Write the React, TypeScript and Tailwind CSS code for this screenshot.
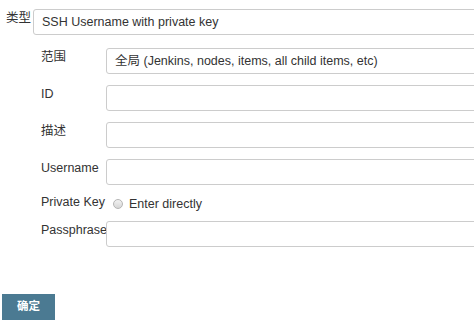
export default function App() {
  const fieldCls =
    'h-[26px] w-[420px] shrink-0 rounded-[3px] border border-[#cccccc] bg-white px-2 text-[12.5px] text-[#333] flex items-center';

  const rows: { label: string; value?: string }[] = [
    { label: 'ID' },
    { label: '描述' },
    { label: 'Username' },
  ];

  return (
    <div
      className="h-[333px] w-full overflow-hidden bg-white text-[12.5px] text-[#333]"
      style={{ fontFamily: '"Liberation Sans", Arial, "Noto Sans CJK SC", sans-serif' }}
    >
      <div className="flex pt-[9px]">
        <div className="w-[33px] shrink-0 pl-[6px] pt-[1px] leading-4">类型</div>
        <div className="h-[26px] w-[460px] shrink-0 rounded-[3px] border border-[#cccccc] px-2 flex items-center">
          SSH Username with private key
        </div>
      </div>

      <div className="pl-[41px]">
        <div className="mt-[13px] flex">
          <div className="w-[65px] shrink-0 pt-[1px] leading-4">范围</div>
          <div className={fieldCls}>全局 (Jenkins, nodes, items, all child items, etc)</div>
        </div>

        {rows.map((r) => (
          <div key={r.label} className="mt-[11px] flex">
            <div className="w-[65px] shrink-0 pt-[1px] leading-4">{r.label}</div>
            <div className={fieldCls}>{r.value}</div>
          </div>
        ))}

        <div className="mt-[9px] flex h-[25px]">
          <div className="w-[72px] shrink-0 leading-4">Private Key</div>
          <div className="flex items-center gap-[6px] pt-[2px] self-start">
            <span className="h-[10px] w-[10px] rounded-full border border-[#b5b5b5] bg-gradient-to-b from-[#f2f2f2] to-[#d6d6d6]" />
            <span className="leading-4">Enter directly</span>
          </div>
        </div>

        <div className="mt-[2px] flex">
          <div className="w-[65px] shrink-0 pt-[1px] leading-4">Passphrase</div>
          <div className={fieldCls} />
        </div>
      </div>

      <div className="mt-[47px] pl-[2px]">
        <button className="flex h-[26px] w-[53px] items-center justify-center bg-[#4b7a92] text-[11.5px] font-bold text-white">
          确定
        </button>
      </div>
    </div>
  );
}
